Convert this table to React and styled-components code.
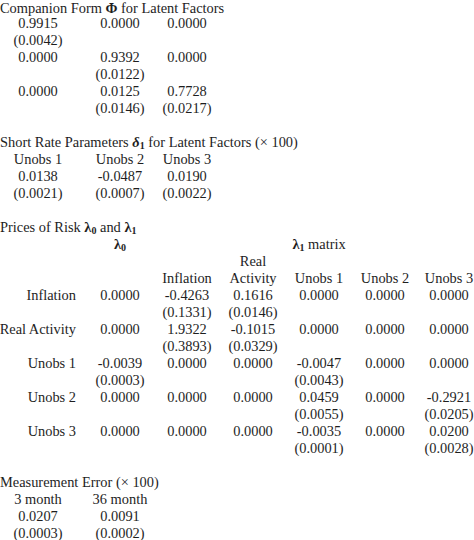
import React from "react";
import styled, { createGlobalStyle } from "styled-components";

const Global = createGlobalStyle`
  html, body { margin: 0; padding: 0; background: #ffffff; }
  body {
    overflow: hidden;
    font-family: "Liberation Serif", "Times New Roman", serif;
    font-size: 14.4px;
    line-height: 17px;
    color: #1e1e1e;
  }
`;

const WIDTHS = [86, 68, 66, 66, 66, 66, 62];

const Page = styled.main`
  width: 474px;
  display: flex;
  flex-direction: column;
`;

const Section = styled.section`
  display: flex;
  flex-direction: column;
  & + & { margin-top: 17px; }
`;

const Title = styled.div`
  height: ${(p) => (p.$top ? "15px" : "17px")};
  line-height: ${(p) => (p.$top ? "16px" : "17px")};
  white-space: nowrap;
`;

const Grid = styled.div`
  display: grid;
  grid-template-columns: ${(p) => WIDTHS.slice(0, p.$cols || 7).map((w) => `${w}px`).join(" ")};
  grid-auto-rows: 17px;
`;

const Cell = styled.div`
  display: flex;
  align-items: flex-end;
  justify-content: ${(p) => (p.$label ? "flex-end" : "center")};
  padding-right: ${(p) => (p.$first ? "10px" : "0")};
  white-space: nowrap;
`;

const WrapHead = styled.div`
  grid-row: span 2;
  display: flex;
  align-items: flex-end;
  justify-content: center;
  text-align: center;
  white-space: normal;
`;

const Symbol = styled.span`
  white-space: nowrap;
`;

const Sym = styled.b`
  font-weight: 700;
  font-style: ${(p) => (p.$italic ? "italic" : "normal")};
`;

const Sub = styled.sub`
  font-size: 10px;
  font-weight: 700;
  vertical-align: -2px;
  line-height: 0;
`;

const Greek = ({ ch, n, italic }) => (
  <Symbol>
    <Sym $italic={italic}>{ch}</Sym>
    {n && <Sub>{n}</Sub>}
  </Symbol>
);

const companion = [
  ["0.9915", "0.0000", "0.0000"],
  ["(0.0042)", "", ""],
  ["0.0000", "0.9392", "0.0000"],
  ["", "(0.0122)", ""],
  ["0.0000", "0.0125", "0.7728"],
  ["", "(0.0146)", "(0.0217)"],
];

const shortRate = [
  ["Unobs 1", "Unobs 2", "Unobs 3"],
  ["0.0138", "-0.0487", "0.0190"],
  ["(0.0021)", "(0.0007)", "(0.0022)"],
];

const prices = [
  ["Inflation", ["0.0000", "-0.4263", "0.1616", "0.0000", "0.0000", "0.0000"], ["", "(0.1331)", "(0.0146)", "", "", ""]],
  ["Real Activity", ["0.0000", "1.9322", "-0.1015", "0.0000", "0.0000", "0.0000"], ["", "(0.3893)", "(0.0329)", "", "", ""]],
  ["Unobs 1", ["-0.0039", "0.0000", "0.0000", "-0.0047", "0.0000", "0.0000"], ["(0.0003)", "", "", "(0.0043)", "", ""]],
  ["Unobs 2", ["0.0000", "0.0000", "0.0000", "0.0459", "0.0000", "-0.2921"], ["", "", "", "(0.0055)", "", "(0.0205)"]],
  ["Unobs 3", ["0.0000", "0.0000", "0.0000", "-0.0035", "0.0000", "0.0200"], ["", "", "", "(0.0001)", "", "(0.0028)"]],
];

const measurement = [
  ["3 month", "36 month"],
  ["0.0207", "0.0091"],
  ["(0.0003)", "(0.0002)"],
];

const SimpleTable = ({ rows }) => (
  <Grid $cols={rows[0].length}>
    {rows.map((row, r) =>
      row.map((v, c) => (
        <Cell key={`${r}-${c}`} $first={c === 0}>
          {v}
        </Cell>
      ))
    )}
  </Grid>
);

export default function App() {
  return (
    <>
      <Global />
      <Page>
        <Section>
          <Title $top>
            Companion Form <Greek ch="Φ" /> for Latent Factors
          </Title>
          <SimpleTable rows={companion} />
        </Section>

        <Section>
          <Title>
            Short Rate Parameters <Greek ch="δ" n="1" italic /> for Latent Factors (× 100)
          </Title>
          <SimpleTable rows={shortRate} />
        </Section>

        <Section>
          <Title>
            Prices of Risk <Greek ch="λ" n="0" /> and <Greek ch="λ" n="1" />
          </Title>
          <Grid $cols={7}>
            <Cell />
            <Cell>
              <Greek ch="λ" n="0" />
            </Cell>
            <Cell />
            <Cell />
            <Cell>
              <span>
                <Greek ch="λ" n="1" /> matrix
              </span>
            </Cell>
            <Cell />
            <Cell />

            <Cell />
            <Cell />
            <Cell />
            <WrapHead>Real Activity</WrapHead>
            <Cell />
            <Cell />
            <Cell />

            <Cell />
            <Cell />
            <Cell>Inflation</Cell>
            <Cell>Unobs 1</Cell>
            <Cell>Unobs 2</Cell>
            <Cell>Unobs 3</Cell>

            {prices.map(([label, vals, ses]) => (
              <React.Fragment key={label}>
                <Cell $label $first>
                  {label}
                </Cell>
                {vals.map((v, i) => (
                  <Cell key={`v${i}`}>{v}</Cell>
                ))}
                <Cell />
                {ses.map((v, i) => (
                  <Cell key={`s${i}`}>{v}</Cell>
                ))}
              </React.Fragment>
            ))}
          </Grid>
        </Section>

        <Section>
          <Title>Measurement Error (× 100)</Title>
          <SimpleTable rows={measurement} />
        </Section>
      </Page>
    </>
  );
}
